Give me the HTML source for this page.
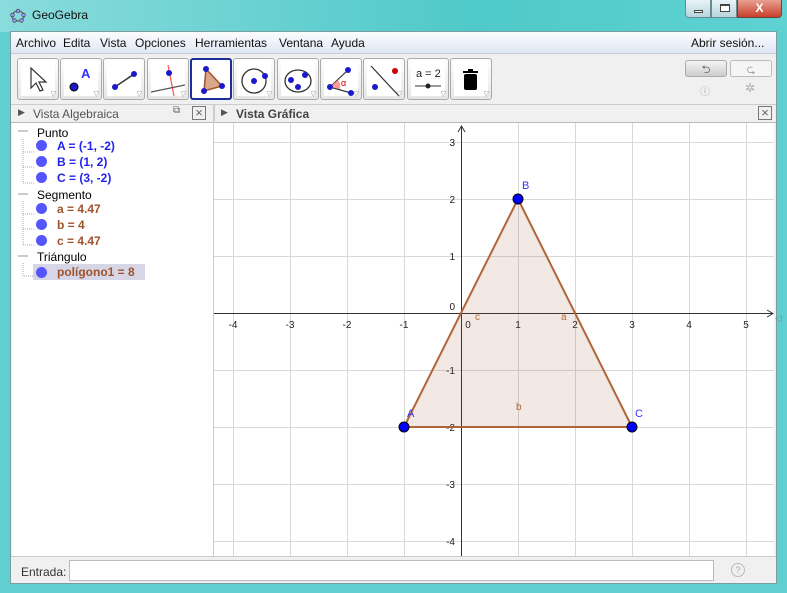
<!DOCTYPE html>
<html><head><meta charset="utf-8"><style>
*{margin:0;padding:0;box-sizing:border-box}
body{width:787px;height:593px;overflow:hidden;background:#5fcfd0;font-family:"Liberation Sans",sans-serif;font-size:12px;position:relative}
.abs{position:absolute}
.tb{top:0;left:0;width:787px;height:32px;background:linear-gradient(90deg,#8adbdc,#4fc9c9 60%,#5fd2d2)}
.win{left:10px;top:31px;width:767px;height:553px;background:#f0f0f0;border:1px solid #7a9ea0}
.menu{left:0;top:0;width:765px;height:22px;background:linear-gradient(#fdfdff,#dfe6f4);border-bottom:1px solid #c8ccd8}
.menu span{position:absolute;top:4px;font-size:12px;color:#111}
.tool{position:absolute;top:26px;width:42px;height:42px;border:1px solid #aaa;border-radius:3px;background:linear-gradient(#fff,#e6e6e6)}
.tool .in{position:absolute;left:3px;top:3px;width:34px;height:34px;background:#fff}
.tool .tri{position:absolute;right:2px;bottom:1px;font-size:7px;color:#888}
.ph{font-size:12px;color:#555}
.alg div{position:absolute;font-size:12px;white-space:nowrap}
.dot{display:inline-block;width:11px;height:11px;border-radius:50%;background:#5555ff;position:absolute}
</style></head><body>
<div class="abs tb"></div>
<svg class="abs" style="left:10px;top:8px" width="16" height="16" viewBox="0 0 16 16"><ellipse cx="8" cy="8" rx="6" ry="5" fill="none" stroke="#666" stroke-width="1.3"/><circle cx="8" cy="3" r="1.8" fill="#99f" stroke="#333" stroke-width=".6"/><circle cx="2.5" cy="7" r="1.8" fill="#99f" stroke="#333" stroke-width=".6"/><circle cx="13.5" cy="7" r="1.8" fill="#99f" stroke="#333" stroke-width=".6"/><circle cx="4.5" cy="12.5" r="1.8" fill="#99f" stroke="#333" stroke-width=".6"/><circle cx="11.5" cy="12.5" r="1.8" fill="#99f" stroke="#333" stroke-width=".6"/></svg>
<div class="abs" style="left:32px;top:8px;font-size:12px;color:#111">GeoGebra</div>
<div class="abs" style="left:685px;top:0;width:26px;height:18px;border:1px solid #6a8a90;border-top:none;border-radius:0 0 0 4px;background:linear-gradient(#e8f4f8,#b8d4dc)"><div style="position:absolute;left:8px;top:10px;width:9px;height:3px;background:#fff;border:1px solid #444"></div></div>
<div class="abs" style="left:711px;top:0;width:26px;height:18px;border:1px solid #6a8a90;border-top:none;background:linear-gradient(#e8f4f8,#b8d4dc)"><div style="position:absolute;left:8px;top:4px;width:10px;height:8px;border:1px solid #444;border-top-width:2px;background:#fff"></div></div>
<div class="abs" style="left:737px;top:0;width:45px;height:18px;border:1px solid #6a4040;border-top:none;border-radius:0 0 4px 0;background:linear-gradient(#e8a090,#c8402a);color:#fff;font-weight:bold;text-align:center;font-size:12px;line-height:16px">X</div>

<div class="abs win">
 <div class="abs menu">
  <span style="left:5px">Archivo</span><span style="left:52px">Edita</span><span style="left:89px">Vista</span><span style="left:124px">Opciones</span><span style="left:184px">Herramientas</span><span style="left:268px">Ventana</span><span style="left:320px">Ayuda</span><span style="left:680px">Abrir sesión...</span>
 </div>
 <!-- tools -->
 <div class="tool" style="left:6px"><div class="in"><svg width="34" height="34"><path d="M10 6 L10 26 L15 21 L19 29 L22 28 L18 20 L25 20 Z" fill="#fff" stroke="#333" stroke-width="1.2"/></svg></div><span class="tri">▽</span></div>
 <div class="tool" style="left:49px"><div class="in"><svg width="34" height="34"><circle cx="10" cy="25" r="4" fill="#1a1acc" stroke="#000"/><text x="17" y="16" font-size="13" font-weight="bold" fill="#3333ff" font-family="Liberation Sans">A</text></svg></div><span class="tri">▽</span></div>
 <div class="tool" style="left:92px"><div class="in"><svg width="34" height="34"><line x1="8" y1="25" x2="27" y2="12" stroke="#333" stroke-width="1.5"/><circle cx="8" cy="25" r="3" fill="#1a1acc"/><circle cx="27" cy="12" r="3" fill="#1a1acc"/></svg></div><span class="tri">▽</span></div>
 <div class="tool" style="left:136px"><div class="in"><svg width="34" height="34"><line x1="17" y1="3" x2="23" y2="34" stroke="#f55" stroke-width="1.2"/><line x1="0" y1="30" x2="34" y2="23" stroke="#555" stroke-width="1.2"/><circle cx="18" cy="11" r="3" fill="#1a1acc"/></svg></div><span class="tri">▽</span></div>
 <div class="tool" style="left:179px;border:2px solid #1b2f9a;background:#fff"><div class="in" style="left:2px;top:2px"><svg width="34" height="34"><path d="M12 7 L28 24 L10 29 Z" fill="#d9a88a" stroke="#a0522d" stroke-width="1.5"/><circle cx="12" cy="7" r="3" fill="#1a1acc"/><circle cx="28" cy="24" r="3" fill="#1a1acc"/><circle cx="10" cy="29" r="3" fill="#1a1acc"/></svg></div></div>
 <div class="tool" style="left:222px"><div class="in"><svg width="34" height="34"><circle cx="17" cy="19" r="12" fill="none" stroke="#333" stroke-width="1.3"/><circle cx="17" cy="19" r="3" fill="#1a1acc"/><circle cx="28" cy="14" r="3" fill="#1a1acc"/></svg></div><span class="tri">▽</span></div>
 <div class="tool" style="left:266px"><div class="in"><svg width="34" height="34"><ellipse cx="17" cy="19" rx="13" ry="11" fill="none" stroke="#333" stroke-width="1.3"/><circle cx="10" cy="18" r="3" fill="#1a1acc"/><circle cx="24" cy="13" r="3" fill="#1a1acc"/><circle cx="17" cy="25" r="3" fill="#1a1acc"/></svg></div><span class="tri">▽</span></div>
 <div class="tool" style="left:309px"><div class="in"><svg width="34" height="34"><path d="M6 25 L24 8 M6 25 L27 31" stroke="#333" stroke-width="1.2" fill="none"/><path d="M6 25 L14 18 A10 10 0 0 1 16 27 Z" fill="#f99"/><text x="17" y="24" font-size="9" fill="#c00">α</text><circle cx="6" cy="25" r="3" fill="#1a1acc"/><circle cx="24" cy="8" r="3" fill="#1a1acc"/><circle cx="27" cy="31" r="3" fill="#1a1acc"/></svg></div><span class="tri">▽</span></div>
 <div class="tool" style="left:352px"><div class="in"><svg width="34" height="34"><line x1="4" y1="4" x2="32" y2="34" stroke="#333" stroke-width="1.2"/><circle cx="8" cy="25" r="3" fill="#1a1acc"/><circle cx="28" cy="9" r="3" fill="#c00"/></svg></div><span class="tri">▽</span></div>
 <div class="tool" style="left:396px"><div class="in"><svg width="34" height="34"><text x="5" y="15" font-size="11" fill="#222" font-family="Liberation Sans">a = 2</text><line x1="4" y1="24" x2="30" y2="24" stroke="#333"/><circle cx="17" cy="24" r="2.5" fill="#222"/></svg></div><span class="tri">▽</span></div>
 <div class="tool" style="left:439px"><div class="in"><svg width="34" height="34"><rect x="10" y="12" width="13" height="16" rx="2" fill="#000"/><rect x="9" y="9" width="15" height="2" fill="#000"/><rect x="14" y="7" width="5" height="2" fill="#000"/></svg></div><span class="tri">▽</span></div>
 <div class="abs" style="left:674px;top:28px;width:42px;height:17px;border:1px solid #aaa;border-radius:3px;background:linear-gradient(#f4f4f4,#ccc);text-align:center;color:#666;font-size:11px">⮌</div>
 <div class="abs" style="left:719px;top:28px;width:42px;height:17px;border:1px solid #bbb;border-radius:3px;background:#f5f5f5;text-align:center;color:#999;font-size:11px">⮎</div>
 <div class="abs" style="left:689px;top:51px;font-size:10px;color:#aaa">ⓘ</div>
 <div class="abs" style="left:734px;top:49px;font-size:12px;color:#aaa">✲</div>

 <!-- panel headers -->
 <div class="abs" style="left:0;top:72px;width:765px;height:19px;background:#f0f0f0;border-top:1px solid #ccc;border-bottom:1px solid #bbb"></div>
 <div class="abs ph" style="left:7px;top:75px;font-size:9px;color:#555">▶</div>
 <div class="abs ph" style="left:22px;top:75px">Vista Algebraica</div>
 <div class="abs" style="left:162px;top:73px;font-size:10px;color:#666">⧉</div>
 <div class="abs" style="left:181px;top:74px;width:14px;height:14px;border:1px solid #777;text-align:center;line-height:11px;color:#666;font-size:13px">×</div>
 <div class="abs" style="left:202px;top:72px;width:2px;height:453px;background:#ccc"></div>
 <div class="abs ph" style="left:210px;top:75px;font-size:9px">▶</div>
 <div class="abs" style="left:225px;top:75px;font-weight:bold;color:#444">Vista Gráfica</div>
 <div class="abs" style="left:747px;top:74px;width:14px;height:14px;border:1px solid #777;text-align:center;line-height:11px;color:#666;font-size:13px">×</div>

 <!-- algebra -->
 <div class="abs alg" style="left:1px;top:91px;width:201px;height:434px;background:#fff">
  <svg class="abs" style="left:0;top:0" width="30" height="190"><g stroke="#aaa" stroke-dasharray="1,1" fill="none"><path d="M11 16 V60 H22 M11 29 H22 M11 44 H22"/><path d="M11 78 V122 H22 M11 91 H22 M11 106 H22"/><path d="M11 140 V153 H22"/></g><g stroke="#999"><path d="M6 8 H16 M6 71 H16 M6 133 H16"/></g></svg>
  <div style="left:25px;top:3px">Punto</div>
  <span class="dot" style="left:24px;top:17px"></span><div style="left:45px;top:16px;color:#2222ee;font-weight:bold">A = (-1, -2)</div>
  <span class="dot" style="left:24px;top:33px"></span><div style="left:45px;top:32px;color:#2222ee;font-weight:bold">B = (1, 2)</div>
  <span class="dot" style="left:24px;top:49px"></span><div style="left:45px;top:48px;color:#2222ee;font-weight:bold">C = (3, -2)</div>
  <div style="left:25px;top:65px">Segmento</div>
  <span class="dot" style="left:24px;top:80px"></span><div style="left:45px;top:79px;color:#a0522d;font-weight:bold">a = 4.47</div>
  <span class="dot" style="left:24px;top:96px"></span><div style="left:45px;top:95px;color:#a0522d;font-weight:bold">b = 4</div>
  <span class="dot" style="left:24px;top:112px"></span><div style="left:45px;top:111px;color:#a0522d;font-weight:bold">c = 4.47</div>
  <div style="left:25px;top:127px">Triángulo</div>
  <div style="left:21px;top:141px;width:112px;height:16px;background:#d6d6e6"></div>
  <span class="dot" style="left:24px;top:144px"></span><div style="left:45px;top:142px;color:#a0522d;font-weight:bold">polígono1 = 8</div>
 </div>
</div>

<!-- graphics -->
<svg class="abs" style="left:214px;top:123px" width="560" height="433" font-family="Liberation Sans" font-size="10">
 <rect width="560" height="433" fill="#fff"/>
 <g stroke="#d8d8d8" stroke-width="1">
  <line x1="19.5" y1="0" x2="19.5" y2="433"/><line x1="76.5" y1="0" x2="76.5" y2="433"/><line x1="133.5" y1="0" x2="133.5" y2="433"/><line x1="190.5" y1="0" x2="190.5" y2="433"/><line x1="304.5" y1="0" x2="304.5" y2="433"/><line x1="361.5" y1="0" x2="361.5" y2="433"/><line x1="418.5" y1="0" x2="418.5" y2="433"/><line x1="475.5" y1="0" x2="475.5" y2="433"/><line x1="532.5" y1="0" x2="532.5" y2="433"/>
  <line y1="19.5" x1="0" y2="19.5" x2="560"/><line y1="76.5" x1="0" y2="76.5" x2="560"/><line y1="133.5" x1="0" y2="133.5" x2="560"/><line y1="247.5" x1="0" y2="247.5" x2="560"/><line y1="304.5" x1="0" y2="304.5" x2="560"/><line y1="361.5" x1="0" y2="361.5" x2="560"/><line y1="418.5" x1="0" y2="418.5" x2="560"/>
 </g>
 <g stroke="#333" stroke-width="1">
  <line x1="0" y1="190.5" x2="558" y2="190.5"/><line x1="247.5" y1="4" x2="247.5" y2="433"/>
  <path d="M553 187 L559 190.5 L553 194 M244 9 L247.5 3 L251 9" fill="none"/>
 </g>
 <g fill="#222" text-anchor="middle">
  <text x="19" y="205">-4</text><text x="76" y="205">-3</text><text x="133" y="205">-2</text><text x="190" y="205">-1</text><text x="254" y="205">0</text><text x="304" y="205">1</text><text x="361" y="205">2</text><text x="418" y="205">3</text><text x="475" y="205">4</text><text x="532" y="205">5</text>
  <g text-anchor="end"><text x="241" y="23">3</text><text x="241" y="80">2</text><text x="241" y="137">1</text><text x="241" y="187">0</text><text x="241" y="251">-1</text><text x="241" y="308">-2</text><text x="241" y="365">-3</text><text x="241" y="422">-4</text></g>
 </g>
 <path d="M190 304 L304 76 L418 304 Z" fill="rgba(160,82,45,0.13)" stroke="#b0643a" stroke-width="2"/>
 <g fill="#b0643a"><text x="261" y="197">c</text><text x="347" y="197">a</text><text x="302" y="287">b</text></g>
 <g fill="#0000ff" stroke="#000" stroke-width="1"><circle cx="190" cy="304" r="5"/><circle cx="304" cy="76" r="5"/><circle cx="418" cy="304" r="5"/></g>
 <g fill="#3333ff" font-size="11"><text x="193" y="294">A</text><text x="308" y="66">B</text><text x="421" y="294">C</text></g>
</svg>
<div class="abs" style="left:775px;top:313px;font-size:9px;color:#888">◁</div>

<!-- input bar -->
<div class="abs" style="left:11px;top:556px;width:765px;height:27px;background:#f0f0f0;border-top:1px solid #ccc"></div>
<div class="abs" style="left:21px;top:565px;font-size:12px;color:#333">Entrada:</div>
<div class="abs" style="left:69px;top:560px;width:645px;height:21px;background:#fff;border:1px solid #bbb"></div>
<div class="abs" style="left:731px;top:563px;width:14px;height:14px;border:1px solid #bbb;border-radius:50%;text-align:center;font-size:9px;line-height:12px;color:#aaa">?</div>
</body></html>
